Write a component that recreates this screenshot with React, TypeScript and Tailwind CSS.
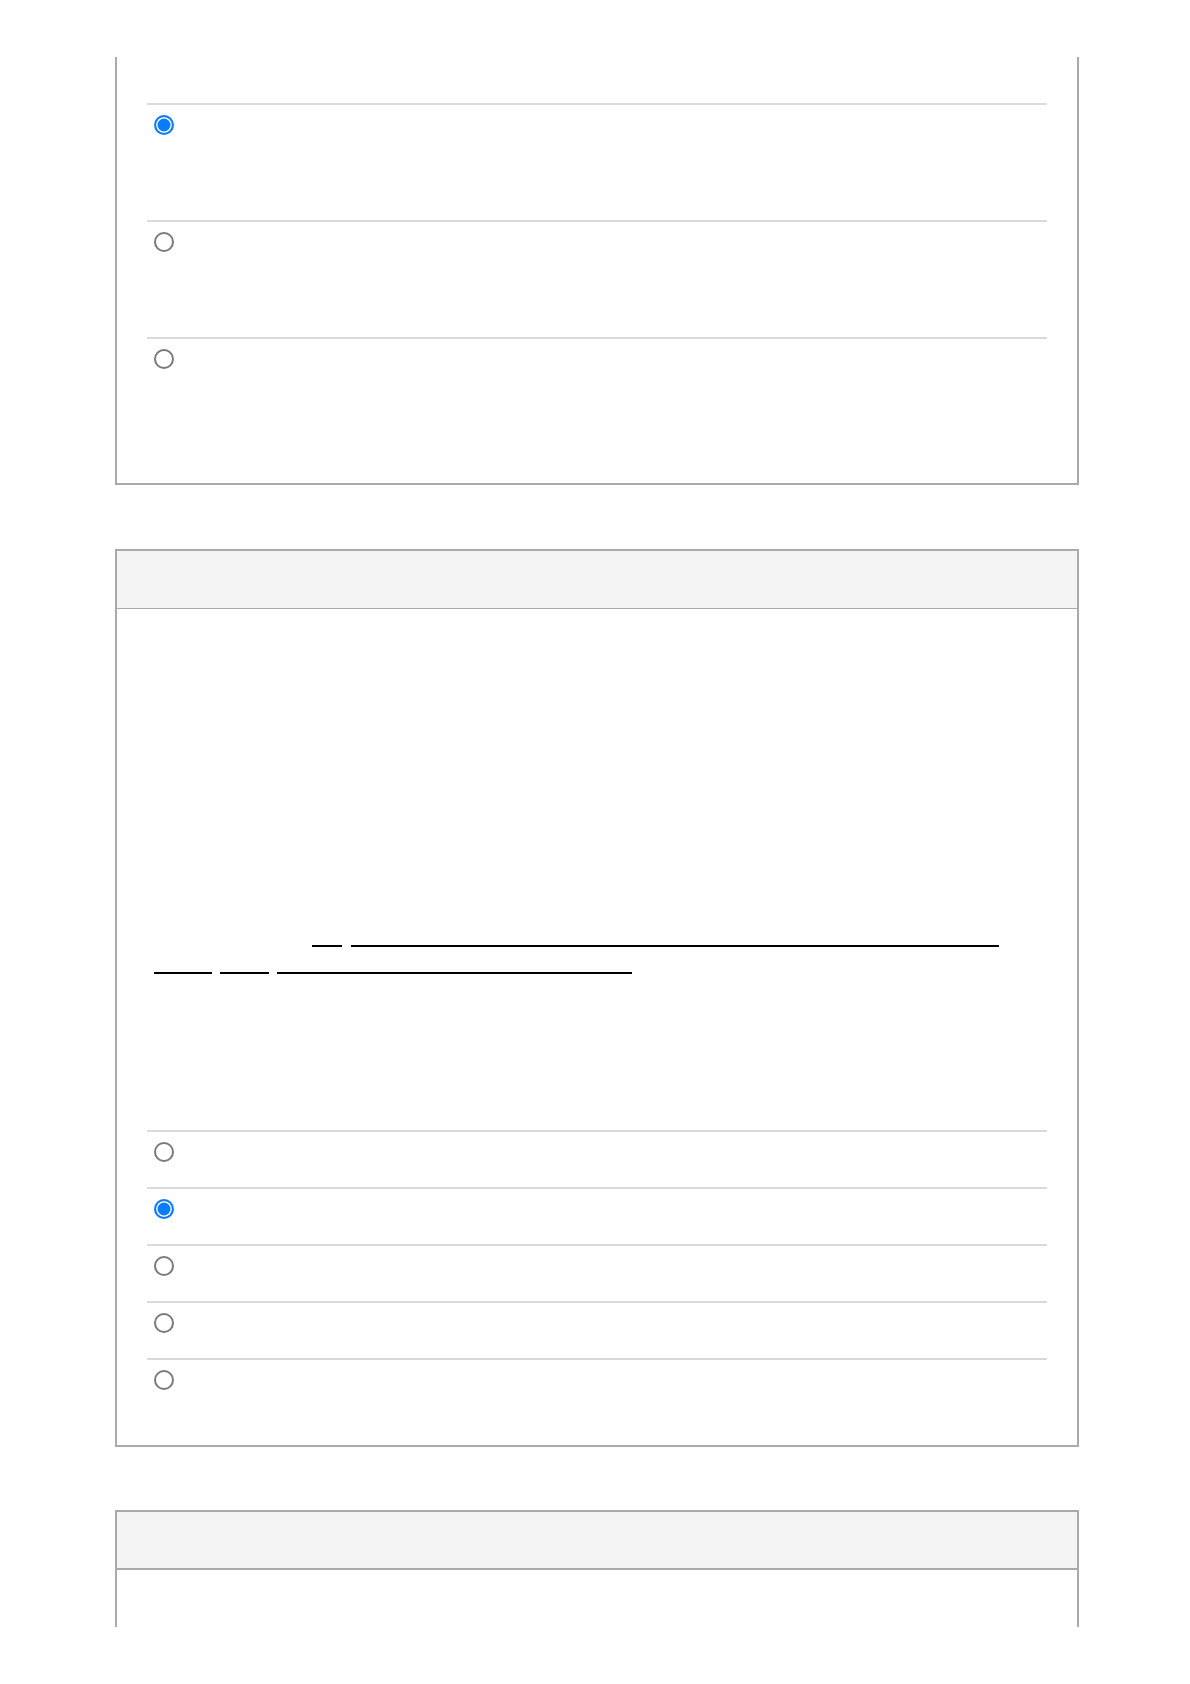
import React from 'react';

// Rows of the two answer groups; the text of the page is not shown in the reference,
// only the radios, separators and the link underlines are.
const firstGroup = [true, false, false];
const secondGroup = [false, true, false, false, false];

function Radio({ checked, name }: { checked: boolean; name: string }) {
    return (
        <input
            type="radio"
            name={name}
            defaultChecked={checked}
            className="m-0 block w-5 h-5 appearance-none rounded-full border-2 border-[#7a7a7a] bg-white checked:border-[#0a7cff] checked:bg-[#0a7cff] checked:shadow-[inset_0_0_0_1.5px_#ffffff]"
        />
    );
}

function Underline({ width }: { width: string }) {
    return <span className={`block h-[2px] bg-black ${width}`} />;
}

export default function App() {
    return (
        <div className="w-[1190px] h-[1684px] bg-white" style={{ fontFamily: '"Liberation Sans", Arial, sans-serif' }}>
            <div className="h-[1627px] overflow-hidden pt-[57px]">
                {/* Question box continued from the previous page */}
                <div className="ml-[115px] w-[964px] border-x-2 border-b-2 border-[#aaaaaa] px-[30px] pb-[28px]">
                    <div className="h-[46px]" />
                    {firstGroup.map((checked, i) => (
                        <div key={i} className="h-[117px] border-t-2 border-[#dadada] pt-[10px] pl-[7px]">
                            <Radio checked={checked} name="q1" />
                        </div>
                    ))}
                    <div className="h-px" />
                </div>

                {/* Second question */}
                <div className="mt-[64px] ml-[115px] w-[964px] border-2 border-[#aaaaaa]">
                    <div className="h-[58px] bg-[#f4f4f4] border-b border-[#aaaaaa]" />
                    <div className="px-[30px] pb-[30px]">
                        <div className="h-[336px]" />
                        <div className="flex flex-col gap-[25px]">
                            <div className="flex pl-[165px] gap-[9px]">
                                <Underline width="w-[30px]" />
                                <Underline width="w-[648px]" />
                            </div>
                            <div className="flex pl-[7px] gap-[8px]">
                                <Underline width="w-[58px]" />
                                <Underline width="w-[49px]" />
                                <Underline width="w-[355px]" />
                            </div>
                        </div>
                        <div className="h-[156px]" />
                        {secondGroup.map((checked, i) => (
                            <div key={i} className="h-[57px] border-t-2 border-[#dadada] pt-[10px] pl-[7px]">
                                <Radio checked={checked} name="q2" />
                            </div>
                        ))}
                    </div>
                </div>

                {/* Next question, cut at the page edge */}
                <div className="mt-[63px] ml-[115px] w-[964px] border-2 border-[#aaaaaa] h-[300px]">
                    <div className="h-[58px] bg-[#f4f4f4] border-b-2 border-[#aaaaaa]" />
                </div>
            </div>
        </div>
    );
}
